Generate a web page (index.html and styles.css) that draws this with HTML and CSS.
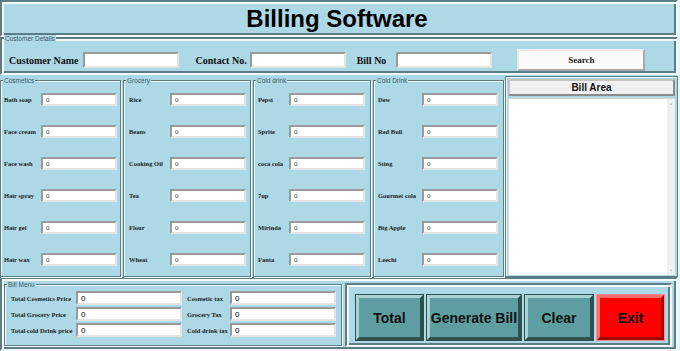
FILE: index.html
```html
<!DOCTYPE html>
<html lang="en">
<head>
  <meta charset="UTF-8">
  <meta name="viewport" content="width=device-width, initial-scale=1.0">
  <title>Billing Software</title>
  <link rel="stylesheet" href="styles.css">
</head>
<body>
  <div class="app">
    <header class="title-bar groove-thick">
      <h1>Billing Software</h1>
    </header>

    <section class="customer groove-thick">
      <span class="legend">Customer Details</span>
      <label class="cust-label">Customer Name</label>
      <input class="cust-input" type="text">
      <label class="cust-label contact">Contact No.</label>
      <input class="cust-input" type="text">
      <label class="cust-label bill-no">Bill No</label>
      <input class="cust-input" type="text">
      <button class="search-btn">Search</button>
    </section>

    <div class="products">
      <section class="item-frame cosmetics groove">
        <span class="legend">Cosmetics</span>
        <div class="item-row"><label>Bath soap</label><input class="item-input" value="0"></div>
        <div class="item-row"><label>Face cream</label><input class="item-input" value="0"></div>
        <div class="item-row"><label>Face wash</label><input class="item-input" value="0"></div>
        <div class="item-row"><label>Hair spray</label><input class="item-input" value="0"></div>
        <div class="item-row"><label>Hair gel</label><input class="item-input" value="0"></div>
        <div class="item-row"><label>Hair wax</label><input class="item-input" value="0"></div>
      </section>
      <section class="item-frame grocery groove">
        <span class="legend">Grocery</span>
        <div class="item-row"><label>Rice</label><input class="item-input" value="0"></div>
        <div class="item-row"><label>Beans</label><input class="item-input" value="0"></div>
        <div class="item-row"><label>Cooking Oil</label><input class="item-input" value="0"></div>
        <div class="item-row"><label>Tea</label><input class="item-input" value="0"></div>
        <div class="item-row"><label>Flour</label><input class="item-input" value="0"></div>
        <div class="item-row"><label>Wheat</label><input class="item-input" value="0"></div>
      </section>
      <section class="item-frame cold groove">
        <span class="legend">Cold drink</span>
        <div class="item-row"><label>Pepsi</label><input class="item-input" value="0"></div>
        <div class="item-row"><label>Sprite</label><input class="item-input" value="0"></div>
        <div class="item-row"><label>coca cola</label><input class="item-input" value="0"></div>
        <div class="item-row"><label>7up</label><input class="item-input" value="0"></div>
        <div class="item-row"><label>Mirinda</label><input class="item-input" value="0"></div>
        <div class="item-row"><label>Fanta</label><input class="item-input" value="0"></div>
      </section>
      <section class="item-frame cold2 groove">
        <span class="legend">Cold Drink</span>
        <div class="item-row"><label>Dew</label><input class="item-input" value="0"></div>
        <div class="item-row"><label>Red Bull</label><input class="item-input" value="0"></div>
        <div class="item-row"><label>Sting</label><input class="item-input" value="0"></div>
        <div class="item-row"><label>Gourmet cola</label><input class="item-input" value="0"></div>
        <div class="item-row"><label>Big Apple</label><input class="item-input" value="0"></div>
        <div class="item-row"><label>Leechi</label><input class="item-input" value="0"></div>
      </section>
      <section class="bill-area groove">
        <div class="bill-title">Bill Area</div>
        <div class="bill-text">
          <div class="bill-body"></div>
          <div class="scrollbar"><span>&#9650;</span><span>&#9660;</span></div>
        </div>
      </section>
    </div>

    <div class="bottom groove-thick">
      <section class="menu-frame groove">
        <span class="legend">Bill Menu</span>
        <div class="menu-grid">
          <label>Total Cosmetics Price</label><input class="menu-input" value="0">
          <label class="tax">Cosmetic tax</label><input class="menu-input" value="0">
          <label>Total Grocery Price</label><input class="menu-input" value="0">
          <label class="tax">Grocery Tax</label><input class="menu-input" value="0">
          <label>Total cold Drink price</label><input class="menu-input" value="0">
          <label class="tax">Cold drink tax</label><input class="menu-input" value="0">
        </div>
      </section>
      <section class="btn-frame groove-thick">
        <button class="action-btn total">Total</button>
        <button class="action-btn generate">Generate Bill</button>
        <button class="action-btn clear">Clear</button>
        <button class="action-btn exit">Exit</button>
      </section>
    </div>
  </div>
</body>
</html>
```

FILE: styles.css
```css
body {
  margin: 0;
  padding: 0;
  background: #e8f3f6;
  font-family: "Liberation Serif", serif;
  overflow: hidden;
}

.app {
  width: 678px;
  height: 351px;
  background: #add8e6;
  display: flex;
  flex-direction: column;
}

/* tk style groove borders */
.groove {
  border: 1px solid #5c7c86;
  box-shadow: inset 1px 1px 0 #f2f9fb, 1px 1px 0 #f2f9fb;
}

.groove-thick {
  border: 2px solid;
  border-color: #5c7c86 #f2f9fb #f2f9fb #5c7c86;
  box-shadow: inset 2px 2px 0 #f2f9fb, inset -2px -2px 0 #5c7c86;
}

.legend {
  position: absolute;
  top: -4px;
  left: 2px;
  padding: 0 1px;
  background: #add8e6;
  font-family: "Liberation Sans", sans-serif;
  font-size: 6.5px;
  line-height: 8px;
  color: #3d5a64;
}

input {
  box-sizing: border-box;
  margin: 0;
  background: #fff;
  border: 2px solid;
  border-color: #9a9a9a #e4e4e4 #e4e4e4 #9a9a9a;
  outline: none;
}

/* title */
.title-bar {
  box-sizing: border-box;
  height: 37px;
  display: flex;
  align-items: center;
  justify-content: center;
}

.title-bar h1 {
  margin: 0 0 0 -4px;
  font-family: "Liberation Sans", sans-serif;
  font-size: 24px;
  font-weight: bold;
  color: #000;
}

/* customer details */
.customer {
  position: relative;
  box-sizing: border-box;
  height: 38px;
  display: flex;
  align-items: center;
  padding: 8px 0 0 7px;
}

.cust-label {
  font-size: 10px;
  font-weight: bold;
  color: #111;
  margin-right: 4px;
}

.cust-label.contact {
  margin-left: 17px;
  margin-right: 3px;
}

.cust-label.bill-no {
  margin-left: 11px;
  margin-right: 10px;
}

.cust-input {
  width: 96px;
  height: 16px;
}

.search-btn {
  width: 128px;
  height: 22px;
  margin-left: 25px;
  background: #fbfbfb;
  border: 2px solid;
  border-color: #e8e8e8 #a8a8a8 #a8a8a8 #e8e8e8;
  font-family: "Liberation Serif", serif;
  font-size: 9px;
  font-weight: bold;
  color: #222;
  padding: 0;
}

/* product frames */
.products {
  display: flex;
  height: 202px;
  box-sizing: border-box;
}

.item-frame {
  position: relative;
  box-sizing: border-box;
  height: 197px;
  margin-top: 5px;
  margin-right: 2px;
  padding: 12px 0 0 3px;
  display: flex;
  flex-direction: column;
  gap: 19px;
}

.item-frame.cosmetics { width: 121px; }
.item-frame.grocery { width: 128px; padding-left: 5px; }
.item-frame.cold { width: 118px; padding-left: 4px; }
.item-frame.cold2 { width: 131px; padding-left: 4px; margin-right: 1px; }

.item-row {
  display: flex;
  align-items: center;
  height: 13px;
}

.item-row label {
  font-size: 6.5px;
  font-weight: bold;
  color: #222;
  white-space: nowrap;
}

.cosmetics .item-row label { width: 37px; }
.grocery .item-row label { width: 41px; }
.cold .item-row label { width: 31px; }
.cold2 .item-row label { width: 44px; }

.item-input {
  width: 76px;
  height: 13px;
  padding: 0 0 0 3px;
  font-family: "Liberation Serif", serif;
  font-size: 7px;
  color: #444;
}

/* bill area */
.bill-area {
  box-sizing: border-box;
  width: 173px;
  height: 201px;
  margin-top: 1px;
  padding: 2px 2px 1px 2px;
  display: flex;
  flex-direction: column;
  gap: 2px;
}

.bill-title {
  height: 17px;
  box-sizing: border-box;
  background: #f0f0f0;
  border: 2px solid;
  border-color: #c4c4c4 #8c8c8c #8c8c8c #c4c4c4;
  font-family: "Liberation Sans", sans-serif;
  font-size: 10px;
  font-weight: bold;
  line-height: 13px;
  text-align: center;
  color: #111;
}

.bill-text {
  flex: 1;
  display: flex;
  background: #fff;
  border-top: 1px solid #d8d8d8;
  border-left: 1px solid #d8d8d8;
}

.bill-body {
  flex: 1;
}

.scrollbar {
  width: 8px;
  background: #f0f0f0;
  display: flex;
  flex-direction: column;
  justify-content: space-between;
  align-items: center;
  font-size: 4px;
  color: #c2c2c2;
  padding: 2px 0;
}

/* bottom */
.bottom {
  box-sizing: border-box;
  height: 74px;
  display: flex;
  padding: 5px 4px 2px 2px;
}

.menu-frame {
  position: relative;
  box-sizing: border-box;
  width: 339px;
  height: 62px;
  padding: 6px 0 0 6px;
}

.menu-grid {
  display: grid;
  grid-template-columns: 65px 106px 48px 106px;
  row-gap: 2px;
  align-items: center;
}

.menu-grid label {
  font-size: 6.5px;
  font-weight: bold;
  color: #222;
  white-space: nowrap;
}

.menu-grid .tax {
  padding-left: 5px;
}

.menu-input {
  width: 106px;
  height: 14px;
  padding: 0 0 0 3px;
  font-family: "Liberation Sans", sans-serif;
  font-size: 8px;
  color: #000;
}

.btn-frame {
  box-sizing: border-box;
  width: 328px;
  height: 64px;
  margin-left: 3px;
  margin-top: -1px;
  display: flex;
  gap: 4px;
  padding: 10px 4px 0 9px;
}

.action-btn {
  height: 45px;
  box-sizing: border-box;
  padding: 0;
  background: #5f9ea0;
  border: 3px solid;
  border-color: #a9d3d5 #2f4f50 #2f4f50 #a9d3d5;
  outline: 1px solid #2f4f50;
  font-family: "Liberation Sans", sans-serif;
  font-size: 14px;
  font-weight: bold;
  color: #111;
}

.action-btn.total { width: 67px; }
.action-btn.generate { width: 94px; }
.action-btn.clear { width: 68px; }

.action-btn.exit {
  width: 67px;
  background: #ff0000;
  border-color: #ff6b6b #a00000 #a00000 #ff6b6b;
  outline-color: #ff8c8c;
}
```
